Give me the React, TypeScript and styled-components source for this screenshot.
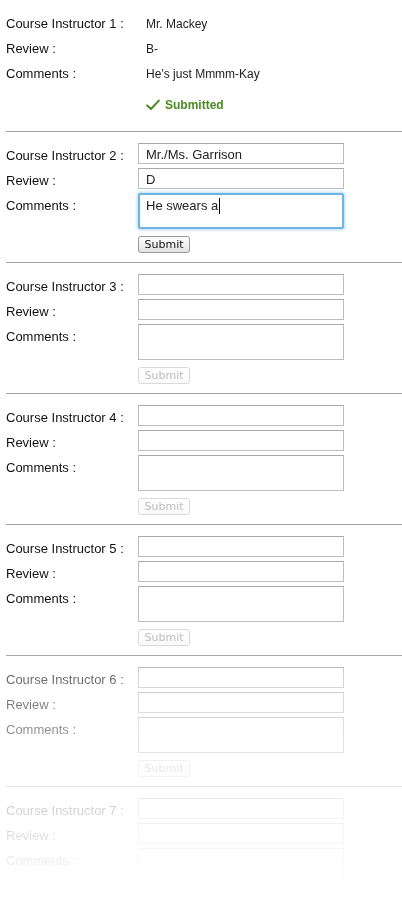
import styled, { createGlobalStyle } from 'styled-components';

type Entry = {
  instructor: string,
  review: string,
  comments: string,
}

const GlobalStyle = createGlobalStyle`
  html, body {
    margin: 0;
    padding: 0;
    background: #fff;
  }
  body {
    font-family: "Liberation Sans", Arial, sans-serif;
    font-size: 13px;
    color: #111;
  }
`;

const emptyRows = [3, 4, 5, 6, 7];

const CheckIcon = () => (
  <svg width="14" height="12" viewBox="0 0 14 12">
    <path d="M1.2 6.4 L5 10 L12.8 1.6" fill="none" stroke="#4c8a20" strokeWidth="2" strokeLinecap="round" strokeLinejoin="round" />
  </svg>
);

const SubmittedSection = ({ index, entry }: { index: number, entry: Entry }) => (
  <ReadOnlySection>
    <Label>Course Instructor {index} :</Label>
    <Value>{entry.instructor}</Value>
    <Label>Review :</Label>
    <Value>{entry.review}</Value>
    <Label>Comments :</Label>
    <Value>{entry.comments}</Value>
    <Status>
      <CheckIcon />
      <span>Submitted</span>
    </Status>
  </ReadOnlySection>
);

const FormSection = ({ index, entry, active }: { index: number, entry?: Entry, active?: boolean }) => (
  <Section>
    <Label>Course Instructor {index} :</Label>
    <Field type="text" defaultValue={entry?.instructor ?? ''} readOnly />
    <Label>Review :</Label>
    <Field type="text" defaultValue={entry?.review ?? ''} readOnly />
    <Label>Comments :</Label>
    {active ? (
      <FocusedArea>
        {entry?.comments}
        <Caret />
      </FocusedArea>
    ) : (
      <Area defaultValue={entry?.comments ?? ''} readOnly />
    )}
    <ButtonRow>
      <SubmitButton disabled={!active}>Submit</SubmitButton>
    </ButtonRow>
  </Section>
);

export default function App() {
  return (
    <Page>
      <GlobalStyle />
      <SubmittedSection index={1} entry={{ instructor: 'Mr. Mackey', review: 'B-', comments: 'He\u2019s just Mmmm-Kay' }} />
      <FormSection index={2} active entry={{ instructor: 'Mr./Ms. Garrison', review: 'D', comments: 'He swears a' }} />
      {emptyRows.map((n) => (
        <FormSection key={n} index={n} />
      ))}
    </Page>
  );
}

const Page = styled.div`
  padding-left: 6px;
  height: 917px;
  overflow: hidden;
  -webkit-mask-image: linear-gradient(to bottom, #000 0, #000 652px, rgba(0,0,0,0.62) 680px, rgba(0,0,0,0.45) 740px, rgba(0,0,0,0.2) 810px, rgba(0,0,0,0.07) 865px, transparent 900px);
  mask-image: linear-gradient(to bottom, #000 0, #000 652px, rgba(0,0,0,0.62) 680px, rgba(0,0,0,0.45) 740px, rgba(0,0,0,0.2) 810px, rgba(0,0,0,0.07) 865px, transparent 900px);
`;

const Section = styled.div`
  display: grid;
  grid-template-columns: 132px 206px;
  row-gap: 4px;
  padding: 11px 0 9px;
  border-bottom: 1px solid #a3a3a3;
`;

const ReadOnlySection = styled(Section)`
  grid-template-rows: 21px 21px 21px auto;
  padding: 11px 0 18px;
`;

const Label = styled.div`
  line-height: 17px;
  padding-top: 4px;
  white-space: nowrap;
  color: #111;
`;

const Value = styled.div`
  line-height: 16px;
  padding: 5px 0 0 8px;
  font-size: 12px;
  color: #222;
  white-space: nowrap;
`;

const Status = styled.div`
  grid-column: 2;
  margin-top: 10px;
  height: 17px;
  display: flex;
  align-items: center;
  gap: 5px;
  padding-left: 8px;
  font-weight: bold;
  font-size: 12px;
  color: #4c8a20;
`;

const Field = styled.input`
  box-sizing: border-box;
  width: 206px;
  height: 21px;
  margin: 0;
  padding: 1px 7px 0;
  border: 1px solid #bdbdbd;
  border-top-color: #a9a9a9;
  border-radius: 0;
  font-family: "Liberation Sans", Arial, sans-serif;
  font-size: 13px;
  color: #222;
  background: #fff;
  outline: none;
`;

const Area = styled.textarea`
  box-sizing: border-box;
  display: block;
  width: 206px;
  height: 36px;
  margin: 0;
  padding: 4px 7px;
  border: 1px solid #bdbdbd;
  border-top-color: #a9a9a9;
  border-radius: 0;
  resize: none;
  font-family: "Liberation Sans", Arial, sans-serif;
  font-size: 13px;
  background: #fff;
  outline: none;
`;

const FocusedArea = styled.div`
  box-sizing: border-box;
  width: 206px;
  height: 36px;
  padding: 3px 6px;
  border: 2px solid #6db3e3;
  border-radius: 2px;
  box-shadow: 0 0 3px 1px rgba(120, 185, 235, 0.55);
  font-size: 13px;
  line-height: 16px;
  color: #222;
  white-space: nowrap;
`;

const Caret = styled.span`
  display: inline-block;
  width: 1px;
  height: 16px;
  margin-left: 1px;
  background: #000;
  vertical-align: -4px;
`;

const ButtonRow = styled.div`
  grid-column: 2;
  margin-top: 3px;
  display: flex;
`;

const SubmitButton = styled.button`
  box-sizing: border-box;
  height: 17px;
  width: 52px;
  padding: 0;
  border: 1px solid #9a9a9a;
  border-radius: 3px;
  background: linear-gradient(to bottom, #ffffff 0%, #f1f1f1 50%, #e2e2e2 100%);
  font-family: "DejaVu Sans", "Lucida Grande", sans-serif;
  font-size: 11px;
  line-height: 15px;
  color: #111;

  &:disabled {
    border-color: #dadada;
    background: linear-gradient(to bottom, #ffffff 0%, #fafafa 100%);
    color: #bdbdbd;
  }
`;
